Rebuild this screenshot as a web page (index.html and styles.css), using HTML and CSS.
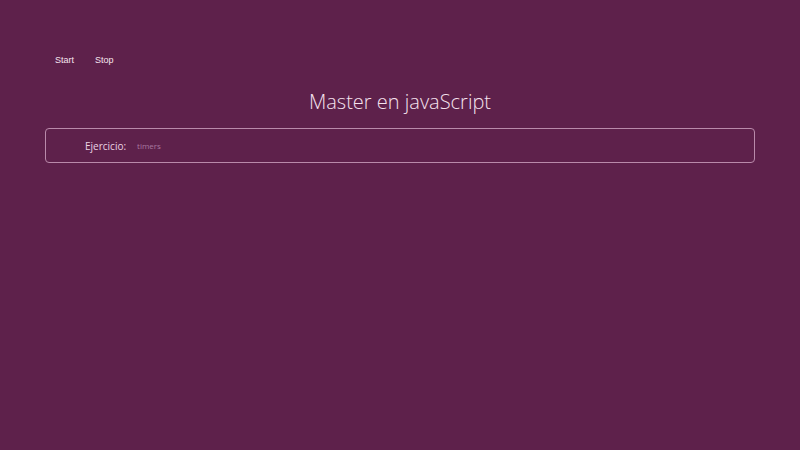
FILE: index.html
```html
<!DOCTYPE html>
<html lang="es">

<head>
    <meta charset="UTF-8">
    <title>Master en javaScript</title>
    <link rel="stylesheet" href="styles.css">
</head>

<body>
    <div class="controls">
        <button id="start">Start</button>
        <button id="stop">Stop</button>
    </div>
    <h1>Master en javaScript</h1>
    <div class="exercise">
        <span class="label">Ejercicio:</span>
        <span class="value">timers</span>
    </div>
</body>

</html>
```

FILE: styles.css
```css
body {
    font-family: "Open Sans", Arial, sans-serif;
    margin: 0;
    padding: 0 45px;
    background-color: #5e214b;
    color: #f3dbe9;
}

.controls {
    display: flex;
    gap: 21px;
    padding: 55px 0 0 10px;
}

.controls button {
    padding: 0;
    border: none;
    background: none;
    color: #f6e4ee;
    font-family: "Liberation Sans", Arial, sans-serif;
    font-size: 9px;
    cursor: pointer;
}

h1 {
    margin: 23px 0 0;
    text-align: center;
    font-weight: 300;
    font-size: 20px;
    line-height: 27px;
    color: #f5e2ee;
}

.exercise {
    display: flex;
    align-items: center;
    height: 33px;
    margin-top: 13px;
    padding-left: 39px;
    border: 1px solid #b98aaa;
    border-radius: 4px;
}

.label {
    font-size: 10px;
    color: #ecd3e3;
}

.value {
    margin-left: 11px;
    font-size: 8px;
    color: #a878a0;
}
```
